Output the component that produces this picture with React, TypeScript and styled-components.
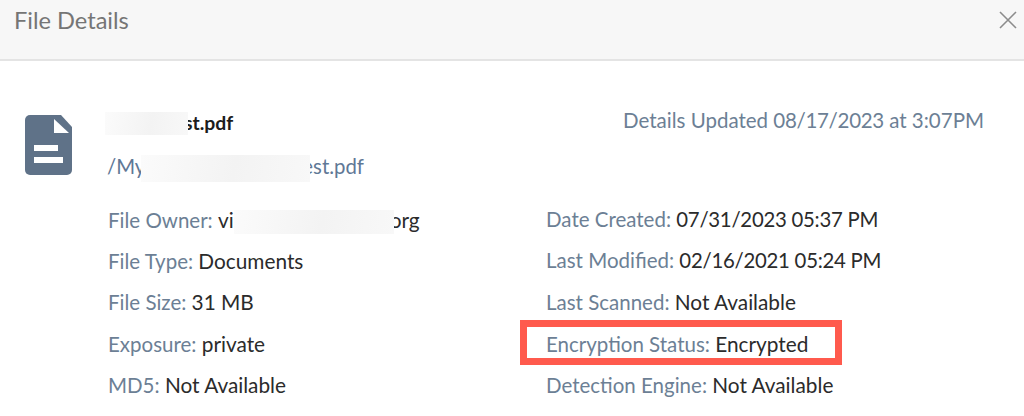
import React from "react";
import styled, { createGlobalStyle } from "styled-components";

const GlobalStyle = createGlobalStyle`
  html, body {
    margin: 0;
    padding: 0;
    background: #fff;
    font-family: Lato, "Open Sans", sans-serif;
  }
`;

const Modal = styled.div`
  width: 1024px;
  height: 416px;
  overflow: hidden;
  background: #fff;
`;

const Header = styled.header`
  height: 61px;
  box-sizing: border-box;
  display: flex;
  justify-content: space-between;
  align-items: flex-start;
  padding: 5px 7px 0 14px;
  background: #f7f7f7;
  border-bottom: 2px solid #e4e4e4;
`;

const Title = styled.h1`
  margin: 0;
  font-size: 23.6px;
  line-height: 30px;
  font-weight: 400;
  color: #757575;
`;

const Close = styled.button`
  display: flex;
  padding: 0;
  margin-top: 6px;
  border: 0;
  background: none;
  color: #8c8c8c;
`;

const Body = styled.div`
  display: flex;
  padding: 50px 40px 0 25px;
`;

const FileIcon = styled.svg`
  flex: none;
  width: 48px;
  height: 60px;
  margin-top: 4px;
`;

const Main = styled.div`
  flex: 1;
  margin-left: 32px;
`;

const TopRow = styled.div`
  display: flex;
  justify-content: space-between;
  align-items: flex-start;
`;

const FileName = styled.div`
  height: 24px;
  font-size: 19.4px;
  line-height: 24px;
  font-weight: 700;
  color: #1c1c1c;
`;

const Updated = styled.div`
  font-size: 20.5px;
  line-height: 18px;
  color: #6c7f95;
`;

const FilePath = styled.div`
  margin: 18px 0 0 2px;
  height: 26px;
  font-size: 20.35px;
  line-height: 26px;
  color: #5f7896;
`;

const Redacted = styled.span<{ $w: number; $h: number; $overlap?: number; $back?: number; $lift?: number }>`
  display: inline-block;
  width: ${(p) => p.$w}px;
  height: ${(p) => p.$h}px;
  margin-left: -${(p) => p.$back ?? 0}px;
  margin-right: -${(p) => p.$overlap ?? 0}px;
  position: relative;
  top: -${(p) => p.$lift ?? 0}px;
  vertical-align: middle;
  background: linear-gradient(100deg, #fbfbfb, #f3f3f3 55%, #f8f8f8);
`;

const Columns = styled.div`
  display: grid;
  grid-template-columns: 438px 1fr;
  margin: 20px 0 0 3px;
`;

const Column = styled.div`
  display: flex;
  flex-direction: column;
`;

const Row = styled.div`
  position: relative;
  height: 41.2px;
  font-size: 20.5px;
  line-height: 41px;
  white-space: nowrap;
  color: #2b2b2b;
`;

const Label = styled.span`
  color: #6c7f95;
`;

const Value = styled.span<{ $numeric?: boolean }>`
  font-size: ${(p) => (p.$numeric ? "20.35px" : "20.8px")};
  letter-spacing: ${(p) => (p.$numeric ? "-0.25px" : "0")};
`;

const Digits = styled.span`
  letter-spacing: -0.3px;
`;

const Frame = styled.div`
  position: absolute;
  left: -26px;
  top: -3px;
  width: 322px;
  height: 45px;
  box-sizing: border-box;
  border: 7px solid #ff5a4d;
`;

const left: [string, React.ReactNode][] = [
  ["File Owner:", <>vi<Redacted $w={160} $h={24} $overlap={4} $lift={1} />org</>],
  ["File Type:", "Documents"],
  ["File Size:", "31 MB"],
  ["Exposure:", "private"],
  ["MD5:", "Not Available"],
];

const right: [string, string, boolean?][] = [
  ["Date Created:", "07/31/2023 05:37 PM", true],
  ["Last Modified:", "02/16/2021 05:24 PM", true],
  ["Last Scanned:", "Not Available"],
  ["Encryption Status:", "Encrypted"],
  ["Detection Engine:", "Not Available"],
];

export default function App() {
  return (
    <Modal>
      <GlobalStyle />
      <Header>
        <Title>File Details</Title>
        <Close aria-label="Close">
          <svg width="18" height="18" viewBox="0 0 18 18" fill="none" stroke="currentColor" strokeWidth="1.6">
            <path d="M1 1l16 16M17 1L1 17" />
          </svg>
        </Close>
      </Header>
      <Body>
        <FileIcon viewBox="0 0 48 60">
          <path
            d="M5 0h31l11 12v43a5 5 0 0 1-5 5H5a5 5 0 0 1-5-5V5a5 5 0 0 1 5-5z"
            fill="#5f7288"
          />
          <path d="M29 4l15 14H29z" fill="#fff" />
          <path d="M9 30h24v6H9zM9 42h29v6H9z" fill="#fff" />
        </FileIcon>
        <Main>
          <TopRow>
            <FileName>
              <Redacted $w={83} $h={23} $overlap={4} $lift={2} />
              st.pdf
            </FileName>
            <Updated>
              Details Updated <Digits>08/17/2023</Digits> at 3:07PM
            </Updated>
          </TopRow>
          <FilePath>
            /My
            <Redacted $w={169} $h={27} $overlap={8} $back={4} />
            est.pdf
          </FilePath>
          <Columns>
            <Column>
              {left.map(([label, value]) => (
                <Row key={label}>
                  <Label>{label}</Label> <Value>{value}</Value>
                </Row>
              ))}
            </Column>
            <Column>
              {right.map(([label, value, numeric]) => (
                <Row key={label}>
                  <Label>{label}</Label> <Value $numeric={numeric}>{value}</Value>
                  {label === "Encryption Status:" && <Frame />}
                </Row>
              ))}
            </Column>
          </Columns>
        </Main>
      </Body>
    </Modal>
  );
}
